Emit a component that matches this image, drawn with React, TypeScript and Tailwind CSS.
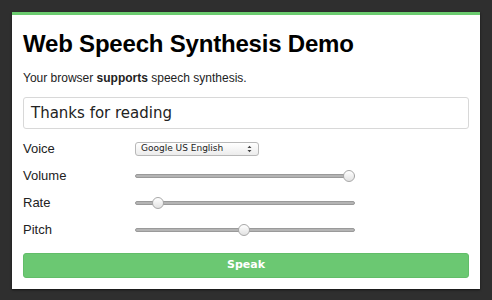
function Slider({ pos }: { pos: number }) {
  return (
    <div className="relative h-[12px] w-[220px] flex items-center">
      <div className="h-[4px] w-full rounded-full bg-[#b4b4b4] border border-[#9a9a9a]" />
      <div
        className="absolute top-0 h-[12px] w-[12px] rounded-full border border-[#a8a8a8] bg-gradient-to-b from-white to-[#e2e2e2]"
        style={{ left: `${pos}px` }}
      />
    </div>
  );
}

const rows = [
  { label: "Volume", pos: 208 },
  { label: "Rate", pos: 17 },
  { label: "Pitch", pos: 103 },
];

export default function App() {
  return (
    <div className="w-[492px] h-[300px] bg-[#2f2f2f] pt-[12px] px-[12px] font-['Liberation_Sans',Arial,sans-serif]">
      <div className="w-[468px] h-[277px] bg-white border-t-[3px] border-[#6bcb6f] px-[11px] pt-[14px] shadow-[0_1px_2px_rgba(0,0,0,0.6)]">
        <h1 className="text-[24px] leading-[30px] font-bold text-black tracking-[-0.2px]">Web Speech Synthesis Demo</h1>
        <p className="mt-[12px] text-[12px] leading-[14px] text-[#222]">
          Your browser <b>supports</b> speech synthesis.
        </p>
        <div className="mt-[12px] h-[32px] w-[446px] rounded-[3px] border border-[#d8d8d8] px-[7px] flex items-center font-['DejaVu_Sans',sans-serif] text-[15px] text-[#222]">
          Thanks for reading
        </div>
        <div className="mt-[12px] flex items-center h-[16px]">
          <div className="w-[112px] text-[13px] text-[#222]">Voice</div>
          <div className="h-[14px] w-[124px] rounded-[3px] border border-[#b8b8b8] bg-gradient-to-b from-white to-[#ececec] flex items-center justify-between pl-[5px] pr-[6px] font-['DejaVu_Sans',sans-serif] text-[9px] text-[#222]">
            <span>Google US English</span>
            <svg width="5" height="8" viewBox="0 0 5 8">
              <path d="M0.5 3L2.5 0.8L4.5 3Z M0.5 5L2.5 7.2L4.5 5Z" fill="#444" />
            </svg>
          </div>
        </div>
        {rows.map((r) => (
          <div key={r.label} className="mt-[11px] flex items-center h-[16px]">
            <div className="w-[112px] text-[13px] text-[#222]">{r.label}</div>
            <Slider pos={r.pos} />
          </div>
        ))}
        <button className="mt-[15px] h-[25px] w-[446px] rounded-[3px] bg-[#6bc872] border border-[#62bd69] text-white text-[11px] font-bold font-['DejaVu_Sans',sans-serif]">
          Speak
        </button>
      </div>
    </div>
  );
}
